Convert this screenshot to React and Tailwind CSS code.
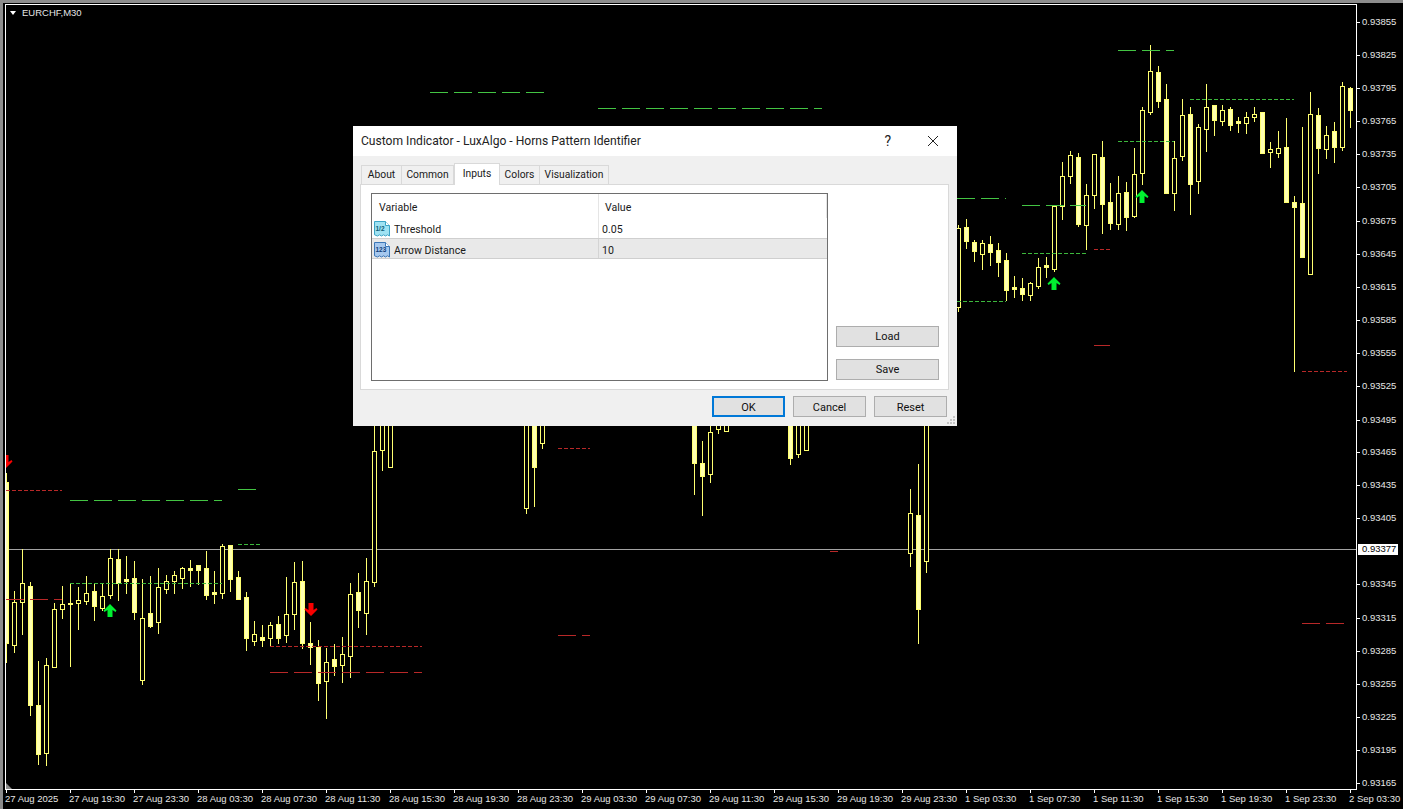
const GREEN_LONG = "#43c443";
const GREEN_SHORT = "#3cb83c";
const RED = "#b82828";

// candles read off the chart: [bar, wickTop, wickBottom, bodyTop, bodyBottom, filled]
// values are 3x offsets from the group's y origin
const GROUPS = [
  {
    y0: 450,
    rows: [
      [0, 70, 640, 95, 580, 1], [1, 423, 608, 457, 584, 0], [2, 298, 555, 400, 455, 0], [3, 395, 798, 408, 765, 1],
      [4, 632, 945, 765, 912, 1], [5, 625, 948, 645, 908, 0], [6, 460, 650, 477, 650, 0], [7, 408, 507, 463, 476, 0],
      [8, 400, 650, 459, 461, 1], [9, 412, 540, 451, 458, 0], [10, 378, 465, 430, 452, 0], [11, 398, 513, 424, 467, 1],
      [12, 398, 483, 439, 473, 0], [13, 298, 447, 325, 434, 0], [14, 298, 452, 328, 398, 1], [15, 318, 432, 387, 393, 1],
      [16, 333, 510, 385, 485, 1], [17, 388, 705, 505, 689, 0], [18, 378, 533, 490, 527, 1], [19, 354, 552, 412, 515, 0],
      [20, 376, 432, 394, 416, 0], [21, 362, 432, 376, 392, 0], [22, 350, 417, 354, 383, 0], [23, 330, 411, 354, 359, 1],
      [24, 346, 404, 346, 359, 1], [25, 303, 450, 355, 434, 1], [26, 363, 462, 427, 431, 1], [27, 283, 447, 289, 428, 0],
      [28, 285, 426, 286, 386, 1], [29, 362, 450, 382, 446, 1],
    ],
  },
  {
    y0: 480,
    rows: [
      [30, 335, 513, 352, 473, 1], [31, 423, 498, 463, 482, 0], [32, 435, 500, 472, 479, 1], [33, 427, 497, 436, 473, 0],
      [34, 408, 492, 433, 473, 1], [35, 291, 489, 403, 464, 0], [36, 246, 450, 307, 401, 0], [37, 243, 507, 304, 488, 1],
      [38, 427, 555, 490, 502, 1], [39, 480, 663, 500, 608, 1], [40, 503, 717, 547, 602, 0], [41, 492, 588, 538, 557, 1],
      [42, 471, 609, 523, 554, 0], [43, 309, 594, 343, 527, 0], [44, 279, 444, 337, 389, 1], [45, 234, 465, 304, 398, 0],
      [46, -180, 321, -87, 307, 0],
    ],
  },
  {
    y0: 420,
    rows: [
      [47, -30, 152, -30, 91, 0], [48, -30, 140, -30, 140, 0],
      [65, -30, 282, -30, 265, 0], [66, -30, 260, -30, 140, 1], [67, -30, 86, -30, 70, 0],
      [86, -30, 225, -30, 128, 1], [87, 63, 288, 130, 167, 1], [88, -30, 188, 37, 163, 0], [89, -30, 42, -30, 28, 0],
      [90, -30, 32, -30, 32, 0], [98, -30, 134, -30, 113, 1], [99, -30, 113, -30, 103, 0], [100, -30, 90, -30, 90, 0],
      [113, 207, 440, 280, 398, 0], [114, 132, 672, 286, 566, 1], [115, -30, 458, -30, 424, 0],
    ],
  },
  {
    y0: 30,
    rows: [
      [119, 585, 845, 595, 832, 0], [120, 568, 657, 591, 632, 1], [121, 630, 695, 636, 662, 1], [122, 630, 720, 640, 671, 0],
      [123, 618, 708, 643, 665, 1], [124, 640, 741, 661, 695, 1], [125, 670, 813, 691, 779, 1], [126, 738, 804, 771, 777, 1],
      [127, 743, 813, 775, 791, 1], [128, 756, 813, 760, 794, 0], [129, 684, 776, 712, 767, 0], [130, 682, 744, 705, 711, 1],
      [131, 525, 725, 529, 716, 0], [132, 396, 570, 439, 527, 0], [133, 363, 462, 376, 437, 0], [134, 370, 590, 382, 581, 1],
      [135, 462, 660, 496, 584, 0], [136, 373, 537, 373, 494, 0], [137, 334, 612, 382, 521, 1], [138, 460, 600, 517, 578, 1],
      [139, 438, 600, 490, 581, 0], [140, 457, 603, 487, 560, 1], [141, 354, 564, 433, 557, 0], [142, 232, 465, 241, 428, 0],
      [143, 45, 255, 124, 245, 0], [144, 108, 234, 127, 212, 1], [145, 162, 488, 207, 488, 1], [146, 334, 543, 385, 488, 0],
      [147, 207, 392, 256, 377, 0], [148, 232, 555, 253, 461, 1], [149, 283, 492, 292, 452, 0], [150, 162, 366, 232, 296, 0],
      [151, 225, 318, 226, 269, 1], [152, 226, 288, 241, 272, 0], [153, 232, 303, 238, 285, 1], [154, 262, 308, 274, 278, 1],
      [155, 247, 312, 262, 278, 0], [156, 232, 276, 253, 260, 0], [157, 245, 368, 247, 368, 1], [158, 336, 414, 358, 365, 0],
      [159, 303, 384, 355, 368, 0], [160, 264, 516, 352, 516, 1], [161, 498, 1026, 516, 530, 1], [162, 292, 682, 520, 680, 1],
      [163, 186, 731, 253, 731, 0], [164, 235, 432, 256, 353, 1], [165, 288, 387, 316, 356, 0], [166, 277, 399, 304, 350, 1],
      [167, 156, 363, 169, 350, 0], [168, 172, 294, 175, 239, 1],
    ],
  },
];

// [x1, x2, y, dash pattern, colour]
const LEVELS = [
  [430, 545, 92, "18 6", GREEN_LONG], [598, 822, 108, "18 6", GREEN_LONG], [70, 222, 500, "18 6", GREEN_LONG],
  [238, 256, 489, "18 6", GREEN_LONG], [957, 1006, 198, "18 6", GREEN_LONG], [1022, 1086, 205, "18 6", GREEN_LONG],
  [1118, 1174, 50, "18 6", GREEN_LONG],
  [70, 222, 583, "4 2", GREEN_SHORT], [238, 260, 544, "4 2", GREEN_SHORT], [957, 1006, 301, "4 2", GREEN_SHORT],
  [1022, 1086, 253, "4 2", GREEN_SHORT], [1118, 1174, 141, "4 2", GREEN_SHORT], [1190, 1294, 99, "4 2", GREEN_SHORT],
  [6, 62, 599, "18 6", RED], [270, 422, 672, "18 6", RED], [558, 590, 635, "18 6", RED],
  [1094, 1110, 345, "18 6", RED], [1302, 1344, 623, "18 6", RED], [830, 838, 551, "18 6", RED],
  [6, 62, 490, "4 2", RED], [270, 422, 646, "4 2", RED], [558, 590, 448, "4 2", RED],
  [1094, 1110, 249, "4 2", RED], [1302, 1347, 371, "4 2", RED],
];

const PRICES = [
  ["0.93855", 22], ["0.93825", 55], ["0.93795", 88], ["0.93765", 121], ["0.93735", 154], ["0.93705", 187],
  ["0.93675", 221], ["0.93645", 254], ["0.93615", 287], ["0.93585", 320], ["0.93555", 353], ["0.93525", 386],
  ["0.93495", 420], ["0.93465", 452], ["0.93435", 485], ["0.93405", 518], ["0.93345", 584], ["0.93315", 618],
  ["0.93285", 651], ["0.93255", 684], ["0.93225", 717], ["0.93195", 750], ["0.93165", 783],
];

const TIMES = [
  "27 Aug 2025", "27 Aug 19:30", "27 Aug 23:30", "28 Aug 03:30", "28 Aug 07:30", "28 Aug 11:30", "28 Aug 15:30",
  "28 Aug 19:30", "28 Aug 23:30", "29 Aug 03:30", "29 Aug 07:30", "29 Aug 11:30", "29 Aug 15:30", "29 Aug 19:30",
  "29 Aug 23:30", "1 Sep 03:30", "1 Sep 07:30", "1 Sep 11:30", "1 Sep 15:30", "1 Sep 19:30", "1 Sep 23:30",
  "2 Sep 03:30",
];

function Candle({ bar, y0, row }) {
  const [, wt, wb, bt, bb, filled] = row;
  const x = 6.5 + 8 * bar;
  const py = (v) => Math.round(y0 + v / 3);
  const top = py(bt);
  const bottom = py(bb);
  return (
    <g>
      <line x1={x} x2={x} y1={py(wt)} y2={py(wb)} stroke="#ffff70" />
      {bottom > top && (
        <rect
          x={x - 2}
          width={4}
          y={top + 0.5}
          height={bottom - top}
          fill={filled ? "#ffffb0" : "#000"}
          stroke="#ffff70"
        />
      )}
    </g>
  );
}

function Arrow({ x, y, down }) {
  const d = "M0 0L6.5 6.5L5.5 8L2.5 6V13H-2.5V6L-5.5 8L-6.5 6.5Z";
  return (
    <path
      d={d}
      fill={down ? "#f80000" : "#00f030"}
      transform={down ? `translate(${x} ${y + 13}) scale(1 -1)` : `translate(${x} ${y})`}
    />
  );
}

function Chart() {
  return (
    <svg width="1350" height="784" viewBox="6 5 1350 784" className="block">
      <line x1="6" x2="1356" y1="549.5" y2="549.5" stroke="#a3a3a3" shapeRendering="crispEdges" />
      <g shapeRendering="crispEdges">
        {GROUPS.map((g) => g.rows.map((r) => <Candle key={r[0]} bar={r[0]} y0={g.y0} row={r} />))}
        {LEVELS.map(([x1, x2, y, dash, color], i) => (
          <line key={i} x1={x1} x2={x2} y1={y + 0.5} y2={y + 0.5} stroke={color} strokeDasharray={dash} />
        ))}
      </g>
      <Arrow x={110} y={604} />
      <Arrow x={1054} y={277} />
      <Arrow x={1142} y={190} />
      <Arrow x={311} y={603} down />
      <Arrow x={6} y={455} down />
      <polygon points="6,783 6,789 12,789" fill="#8a8a8a" />
    </svg>
  );
}

function PageIcon({ fill, edge, label, labelColor }) {
  return (
    <svg width="16" height="16" viewBox="0 0 16 16" className="-mt-[2px] shrink-0">
      <path
        d="M0.5 0.5H11.5L15.5 4.5V15L13.5 13.8L11.5 15L9.5 13.8L7.5 15L5.5 13.8L3.5 15L0.5 13.8Z"
        fill={fill}
        stroke={edge}
      />
      <path d="M11.5 0.5V4.5H15.5" fill="#fff" stroke={edge} />
      <text x="1.5" y="10" fontSize="6.5" fontWeight="700" fontFamily="Liberation Sans, sans-serif" fill={labelColor}>
        {label}
      </text>
    </svg>
  );
}

function Tab({ label, width, active }) {
  return (
    <div
      className={
        active
          ? "relative z-10 flex h-[22px] -mb-px items-center justify-center border border-b-0 border-[#d9d9d9] bg-white pb-[2px]"
          : "flex h-[19px] items-center justify-center border border-b-0 border-l-0 first:border-l border-[#d9d9d9] bg-[#f0f0f0]"
      }
      style={{ width }}
    >
      {label}
    </div>
  );
}

function Btn({ label, wide, primary }) {
  return (
    <button
      type="button"
      className={`flex h-[21px] items-center justify-center bg-[#e1e1e1] text-[11px] text-[#111] ${
        wide ? "w-[103px] pt-[2px]" : "w-[73px] pt-[3px]"
      } ${primary ? "border-2 border-[#0078d7]" : "border border-[#adadad]"}`}
    >
      {label}
    </button>
  );
}

function Dialog() {
  return (
    <div className="absolute left-[353px] top-[126px] flex h-[300px] w-[604px] flex-col bg-[#f0f0f0] font-['Roboto',sans-serif] text-[10.6px] text-[#1a1a1a]">
      <div className="flex h-[30px] items-center bg-white pl-[8px] pr-[18px] text-[12.1px] text-[#222]">
        <span>Custom Indicator - LuxAlgo - Horns Pattern Identifier</span>
        <span className="ml-auto mr-[36px] text-[14px]">?</span>
        <svg width="12" height="12" viewBox="0 0 12 12">
          <path d="M1 1L11 11M11 1L1 11" stroke="#222" strokeWidth="1" fill="none" />
        </svg>
      </div>

      <div className="ml-[8px] mt-[7px] flex items-end text-[10.3px]">
        <Tab label="About" width={41} />
        <Tab label="Common" width={52} />
        <Tab label="Inputs" width={46} active />
        <Tab label="Colors" width={40} />
        <Tab label="Visualization" width={69} />
      </div>

      <div className="ml-[7px] flex h-[206px] w-[589px] gap-[8px] border border-[#d9d9d9] bg-white pl-[10px] pt-[8px]">
        <div className="h-[188px] w-[457px] border border-[#6e6e6e] bg-white">
          <div className="flex h-[24px] items-center">
            <div className="flex h-full w-[227px] items-center border-r border-[#e5e5e5] pl-[7px] pt-[4px]">Variable</div>
            <div className="flex h-full w-[228px] items-center border-r border-[#e5e5e5] pl-[6px] pt-[4px]">Value</div>
          </div>
          <div className="flex h-[20px] items-center">
            <div className="flex h-full w-[227px] items-center gap-[4px] border-r border-[#e5e5e5] pl-[2px] pt-[4px]">
              <PageIcon fill="#9fe2f2" edge="#3ba4c6" label="1/2" labelColor="#0c5c78" />
              Threshold
            </div>
            <div className="flex h-full items-center pl-[3px] pt-[4px]">0.05</div>
          </div>
          <div className="flex h-[21px] w-[455px] items-center border-y border-[#cfcfcf] bg-[#e9e9e9]">
            <div className="flex h-full w-[227px] items-center gap-[4px] border-r border-[#d4d4d4] pl-[2px] pt-[4px]">
              <PageIcon fill="#a6c8ee" edge="#3a76b6" label="123" labelColor="#123f7a" />
              Arrow Distance
            </div>
            <div className="flex h-full items-center pl-[3px] pt-[4px]">10</div>
          </div>
        </div>
        <div className="flex h-[187px] flex-col justify-end gap-[12px]">
          <Btn label="Load" wide />
          <Btn label="Save" wide />
        </div>
      </div>

      <div className="relative mt-[6px] flex justify-end gap-[8px] pr-[10px]">
        <Btn label="OK" primary />
        <Btn label="Cancel" />
        <Btn label="Reset" />
        <svg width="9" height="9" viewBox="0 0 9 9" className="absolute right-[1px] top-[20px]">
          <path d="M6 0h2v2H6zM3 3h2v2H3zM6 3h2v2H6zM0 6h2v2H0zM3 6h2v2H3zM6 6h2v2H6z" fill="#c4c4c4" />
        </svg>
      </div>
    </div>
  );
}

export default function App() {
  return (
    <div className="relative h-[809px] w-[1403px] overflow-hidden bg-black font-['Liberation_Sans',sans-serif] text-[9.5px] text-[#e6e6e6]">
      <div className="h-[3px] bg-[#8c8c8c]" />
      <div className="flex">
        <div className="h-[806px] w-[3px] shrink-0 bg-[#8c8c8c]" />
        <div className="ml-[2px] mt-[1px] flex flex-col">
          <div className="flex">
            <div className="relative h-[786px] w-[1352px] shrink-0 border border-white">
              <Chart />
              <div className="absolute left-[4px] top-[2px] flex h-[12px] items-center gap-[6px]">
                <svg width="6" height="4" viewBox="0 0 6 4">
                  <polygon points="0,0 6,0 3,4" fill="#fff" />
                </svg>
                <span>EURCHF,M30</span>
              </div>
            </div>
            <div className="relative w-[46px] shrink-0">
              {PRICES.map(([label, y]) => (
                <div key={label} className="absolute left-0 flex h-[12px] items-center" style={{ top: y - 10 }}>
                  <span className="h-px w-[3px] bg-white" />
                  <span className="ml-[2px]">{label}</span>
                </div>
              ))}
              <div className="absolute left-[1px] top-[540px] flex h-[11px] w-[40px] items-center bg-white pl-[4px] text-black">
                0.93377
              </div>
            </div>
          </div>
          <div className="flex">
            {TIMES.map((t) => (
              <div key={t} className="w-[64px] shrink-0">
                <div className="ml-[1px] h-[3px] w-px bg-white" />
                <div className="whitespace-nowrap leading-[11px]">{t}</div>
              </div>
            ))}
          </div>
        </div>
      </div>
      <Dialog />
    </div>
  );
}
